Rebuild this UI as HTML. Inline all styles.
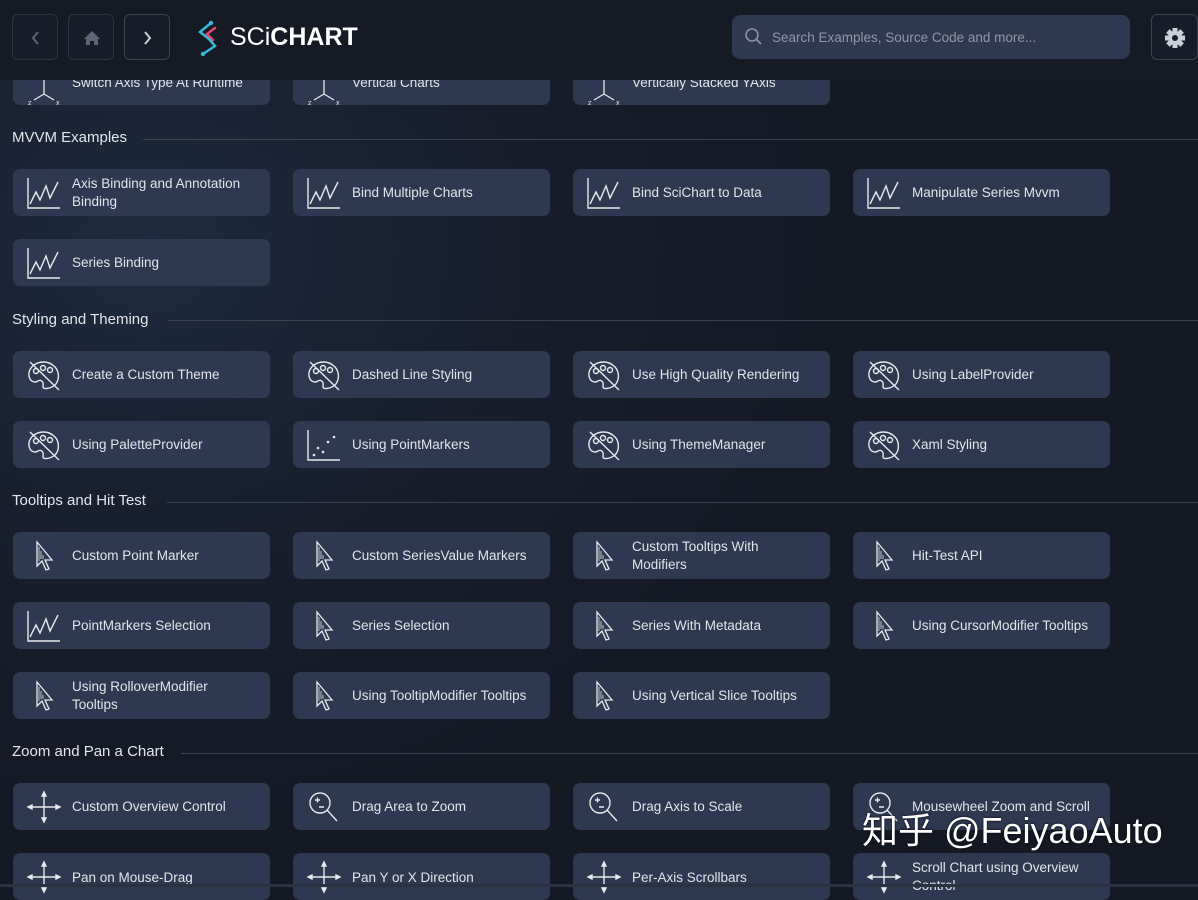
<!DOCTYPE html>
<html><head><meta charset="utf-8"><style>
*{margin:0;padding:0;box-sizing:border-box}
body{width:1198px;height:887px;overflow:hidden;background:#141924;font-family:"Liberation Sans","Noto Sans CJK SC",sans-serif;position:relative}
.bg{position:absolute;left:0;top:0;width:1198px;height:887px;background:radial-gradient(ellipse 700px 600px at 150px 250px,#1e2a40 0%,#171d2b 55%,#141924 100%)}
.hdr{position:absolute;left:0;top:0;width:1198px;height:80px;background:#151a25;z-index:5}
.nb{position:absolute;top:14px;width:46px;height:46px;border:1px solid #2b3242;border-radius:6px;background:#171c28}
.c{position:absolute;width:257px;height:47px;background:#2e3850;border-radius:7px;color:#e1e5ec;font-size:13.5px;line-height:18px}
.c span{position:absolute;left:59px;top:50%;transform:translateY(-50%);width:190px}
.c svg{position:absolute;left:13px;top:7px;width:36px;height:34px}
.h{position:absolute;left:12px;color:#e3e6ec;font-size:15px;height:20px;line-height:20px}
.ln{position:absolute;height:1px;background:#39404f;right:0}
</style></head><body>
<svg width="0" height="0" style="position:absolute">
<defs>
<symbol id="ax" viewBox="0 0 36 34"><g stroke="#e6e9ee" stroke-width="1.3" fill="none"><path d="M18 4V18M18 18L8 24M18 18L28 24"/></g><text x="2" y="29" font-size="7" fill="#e6e9ee" font-family="Liberation Sans">z</text><text x="30" y="29" font-size="7" fill="#e6e9ee" font-family="Liberation Sans">x</text></symbol>
<symbol id="ln" viewBox="0 0 36 34"><g stroke="#e6e9ee" stroke-width="1.4" fill="none"><path d="M2 2V32H34"/><path d="M4 28L10 16L14 24L20 10L24 22L32 6"/></g></symbol>
<symbol id="pa" viewBox="0 0 36 34"><g stroke="#e6e9ee" stroke-width="1.4" fill="none"><path d="M18 4C8 4 2 11 3 18C4 24 9 25 12 23C15 21 18 24 17 28C16 32 24 31 29 27C34 22 33 13 29 9C26 6 22 4 18 4Z"/><circle cx="10" cy="13" r="2.5"/><circle cx="17" cy="10" r="2.5"/><circle cx="24" cy="12" r="2.5"/><path d="M4 4L33 32"/></g></symbol>
<symbol id="pm" viewBox="0 0 36 34"><g stroke="#e6e9ee" stroke-width="1.4" fill="none"><path d="M2 2V32H34"/></g><g fill="#e6e9ee"><circle cx="8" cy="27" r="1.3"/><circle cx="12" cy="20" r="1.3"/><circle cx="17" cy="24" r="1.3"/><circle cx="22" cy="14" r="1.3"/><circle cx="28" cy="9" r="1.3"/></g></symbol>
<symbol id="cu" viewBox="0 0 36 34"><path d="M11 3V27L16 22L20 31L23 30L19 21L26 21Z" stroke="#e6e9ee" stroke-width="1.3" fill="none"/><path d="M13 8L13 22M15 12L15 20M17 16L17 20" stroke="#e6e9ee" stroke-width="0.8"/></symbol>
<symbol id="zm" viewBox="0 0 36 34"><g stroke="#e6e9ee" stroke-width="1.4" fill="none"><circle cx="14" cy="13" r="10"/><path d="M21 20L31 31M9 10H14M11.5 7.5V12.5M13 17H18"/></g></symbol>
<symbol id="mv" viewBox="0 0 36 34"><g stroke="#e6e9ee" stroke-width="1.4" fill="#e6e9ee"><path d="M18 3V31M3 17H33" fill="none"/><path d="M18 2L16 6H20Z M18 32L16 28H20Z M2 17L6 15V19Z M34 17L30 15V19Z"/></g></symbol>
</defs></svg>
<div class="bg"></div>
<div class="hdr">
<div class="nb" style="left:12px"><svg width="46" height="46"><path d="M25 17L20 23L25 29" stroke="#5c6475" stroke-width="2" fill="none"/></svg></div>
<div class="nb" style="left:68px"><svg width="46" height="46"><path d="M15 24L23 16L31 24H29V30H25V26H21V30H17V24Z" fill="#5c6475"/></svg></div>
<div class="nb" style="left:124px;border-color:#3a4253"><svg width="46" height="46"><path d="M20 17L25 23L20 29" stroke="#c9ced8" stroke-width="2" fill="none"/></svg></div>
<svg style="position:absolute;left:195px;top:20px" width="32" height="38"><g fill="none" stroke-width="2.5" stroke-linecap="round"><path d="M16 3L5 12L14 19" stroke="#3ab8d8"/><path d="M20 8L12 14L18 20" stroke="#e0476b"/><path d="M14 19L20 26L8 34" stroke="#3ab8d8"/></g><circle cx="16" cy="3" r="2.2" fill="#3ab8d8"/><circle cx="8" cy="34" r="2.2" fill="#3ab8d8"/></svg>
<div style="position:absolute;left:230px;top:23px;font-size:25px;color:#fff;letter-spacing:0px">SCi<b>CHART</b></div>
<div style="position:absolute;left:732px;top:15px;width:398px;height:44px;background:#2e3850;border-radius:8px"><svg style="position:absolute;left:12px;top:12px" width="20" height="20"><circle cx="8" cy="8" r="6" stroke="#8a93a6" stroke-width="1.6" fill="none"/><path d="M12.5 12.5L17 17" stroke="#8a93a6" stroke-width="1.6"/></svg><div style="position:absolute;left:40px;top:15px;font-size:13.5px;color:#8e97a8">Search Examples, Source Code and more...</div></div>
<div class="nb" style="left:1151px;width:47px;border-color:#3a4253"><svg width="46" height="46"><g transform="translate(23 23)" fill="#c9ced8"><circle r="7"/><rect x="-2.5" y="-10" width="5" height="20"/><rect x="-2.5" y="-10" width="5" height="20" transform="rotate(45)"/><rect x="-2.5" y="-10" width="5" height="20" transform="rotate(90)"/><rect x="-2.5" y="-10" width="5" height="20" transform="rotate(135)"/><circle r="3" fill="#171c28"/></g></svg></div>
</div>

<div class="c" style="left:13px;top:58px"><svg style="top:18px"><use href="#ax"/></svg><span style="top:25px">Switch Axis Type At Runtime</span></div>
<div class="c" style="left:293px;top:58px"><svg style="top:18px"><use href="#ax"/></svg><span style="top:25px">Vertical Charts</span></div>
<div class="c" style="left:573px;top:58px"><svg style="top:18px"><use href="#ax"/></svg><span style="top:25px">Vertically Stacked YAxis</span></div>

<div class="h" style="top:128px">MVVM Examples</div><div class="ln" style="left:143px;top:139px"></div>
<div class="c" style="left:13px;top:169px"><svg><use href="#ln"/></svg><span>Axis Binding and Annotation Binding</span></div>
<div class="c" style="left:293px;top:169px"><svg><use href="#ln"/></svg><span>Bind Multiple Charts</span></div>
<div class="c" style="left:573px;top:169px"><svg><use href="#ln"/></svg><span>Bind SciChart to Data</span></div>
<div class="c" style="left:853px;top:169px"><svg><use href="#ln"/></svg><span>Manipulate Series Mvvm</span></div>
<div class="c" style="left:13px;top:239px"><svg><use href="#ln"/></svg><span>Series Binding</span></div>

<div class="h" style="top:310px">Styling and Theming</div><div class="ln" style="left:168px;top:320px"></div>
<div class="c" style="left:13px;top:351px"><svg><use href="#pa"/></svg><span>Create a Custom Theme</span></div>
<div class="c" style="left:293px;top:351px"><svg><use href="#pa"/></svg><span>Dashed Line Styling</span></div>
<div class="c" style="left:573px;top:351px"><svg><use href="#pa"/></svg><span>Use High Quality Rendering</span></div>
<div class="c" style="left:853px;top:351px"><svg><use href="#pa"/></svg><span>Using LabelProvider</span></div>
<div class="c" style="left:13px;top:421px"><svg><use href="#pa"/></svg><span>Using PaletteProvider</span></div>
<div class="c" style="left:293px;top:421px"><svg><use href="#pm"/></svg><span>Using PointMarkers</span></div>
<div class="c" style="left:573px;top:421px"><svg><use href="#pa"/></svg><span>Using ThemeManager</span></div>
<div class="c" style="left:853px;top:421px"><svg><use href="#pa"/></svg><span>Xaml Styling</span></div>

<div class="h" style="top:491px">Tooltips and Hit Test</div><div class="ln" style="left:167px;top:502px"></div>
<div class="c" style="left:13px;top:532px"><svg><use href="#cu"/></svg><span>Custom Point Marker</span></div>
<div class="c" style="left:293px;top:532px"><svg><use href="#cu"/></svg><span>Custom SeriesValue Markers</span></div>
<div class="c" style="left:573px;top:532px"><svg><use href="#cu"/></svg><span style="width:170px">Custom Tooltips With Modifiers</span></div>
<div class="c" style="left:853px;top:532px"><svg><use href="#cu"/></svg><span>Hit-Test API</span></div>
<div class="c" style="left:13px;top:602px"><svg><use href="#ln"/></svg><span>PointMarkers Selection</span></div>
<div class="c" style="left:293px;top:602px"><svg><use href="#cu"/></svg><span>Series Selection</span></div>
<div class="c" style="left:573px;top:602px"><svg><use href="#cu"/></svg><span>Series With Metadata</span></div>
<div class="c" style="left:853px;top:602px"><svg><use href="#cu"/></svg><span>Using CursorModifier Tooltips</span></div>
<div class="c" style="left:13px;top:672px"><svg><use href="#cu"/></svg><span style="width:160px">Using RolloverModifier Tooltips</span></div>
<div class="c" style="left:293px;top:672px"><svg><use href="#cu"/></svg><span>Using TooltipModifier Tooltips</span></div>
<div class="c" style="left:573px;top:672px"><svg><use href="#cu"/></svg><span>Using Vertical Slice Tooltips</span></div>

<div class="h" style="top:742px">Zoom and Pan a Chart</div><div class="ln" style="left:181px;top:753px"></div>
<div class="c" style="left:13px;top:783px"><svg><use href="#mv"/></svg><span>Custom Overview Control</span></div>
<div class="c" style="left:293px;top:783px"><svg><use href="#zm"/></svg><span>Drag Area to Zoom</span></div>
<div class="c" style="left:573px;top:783px"><svg><use href="#zm"/></svg><span>Drag Axis to Scale</span></div>
<div class="c" style="left:853px;top:783px"><svg><use href="#zm"/></svg><span>Mousewheel Zoom and Scroll</span></div>
<div class="c" style="left:13px;top:853px"><svg><use href="#mv"/></svg><span style="top:25px">Pan on Mouse-Drag</span></div>
<div class="c" style="left:293px;top:853px"><svg><use href="#mv"/></svg><span style="top:25px">Pan Y or X Direction</span></div>
<div class="c" style="left:573px;top:853px"><svg><use href="#mv"/></svg><span style="top:25px">Per-Axis Scrollbars</span></div>
<div class="c" style="left:853px;top:853px"><svg><use href="#mv"/></svg><span style="top:24px;width:190px">Scroll Chart using Overview Control</span></div>
<div style="position:absolute;left:0;top:884px;width:1198px;height:3px;background:#2a3140"></div>
<div style="position:absolute;left:862px;top:810px;font-size:36px;color:#fff;line-height:42px;white-space:nowrap;text-shadow:0 0 2px #000">知乎 @FeiyaoAuto</div>
</body></html>
